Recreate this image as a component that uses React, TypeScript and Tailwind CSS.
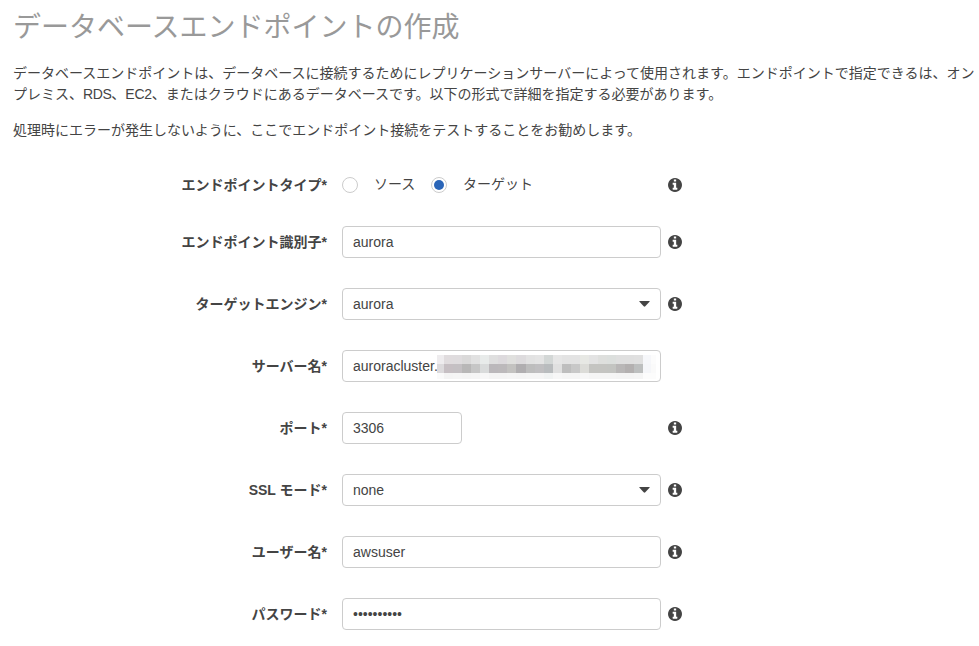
import { ReactNode } from "react";

// Each column of the redacted host name: width, then top, middle and bottom shade.
const MOSAIC: Array<[number, string, string, string]> = [
  [7, "#eeecee", "#dcdadc", "#fafafa"],
  [9, "#e0dcde", "#c6bfc3", "#f4f4f4"],
  [9, "#dfdcde", "#c4c0c3", "#f5f5f5"],
  [9, "#dad9d9", "#b8b7b7", "#f4f4f4"],
  [9, "#e1e1e1", "#c6c6c6", "#f5f5f5"],
  [9, "#e8ebea", "#d9dbdb", "#f7f7f7"],
  [9, "#dfdfdf", "#bbb8bb", "#f4f4f4"],
  [9, "#dddadd", "#bcb9bb", "#f4f4f4"],
  [9, "#e0e0de", "#c3c2c0", "#f5f5f5"],
  [10, "#dddbdd", "#b0aeb0", "#f4f4f4"],
  [9, "#e2e2e2", "#bdbdbd", "#f5f5f5"],
  [9, "#e4e4e4", "#c0bfc1", "#f5f5f5"],
  [9, "#d3d7d6", "#b9bcbe", "#f1f3f3"],
  [9, "#e6e6e6", "#e0e0e0", "#f7f7f7"],
  [9, "#e3e3e3", "#bebebe", "#f5f5f5"],
  [9, "#e3e3e3", "#c8c8c8", "#f5f5f5"],
  [9, "#e7e8e4", "#dcdcd8", "#f7f7f7"],
  [9, "#e3e3e3", "#c4c4c1", "#f5f5f5"],
  [9, "#dedfdd", "#c4c4c1", "#f5f5f5"],
  [9, "#dcdfdd", "#c3c4c1", "#f5f5f5"],
  [9, "#dfdfdf", "#b9b7b7", "#f4f4f4"],
  [9, "#dfdfdf", "#b3b0b0", "#f4f4f4"],
  [9, "#e0e0e0", "#bdbfbf", "#f5f5f5"],
  [8, "#f6f7fa", "#f5f6f9", "#fcfcfc"],
  [5, "#fcfcfc", "#fafafa", "#fcfcfc"],
];

function Mosaic() {
  return (
    <div className="mt-0.5 flex h-6">
      {MOSAIC.map(([width, top, middle, bottom], i) => (
        <div key={i} className="grid grid-rows-[9px_9px_6px]" style={{ width }}>
          <div style={{ background: top }} />
          <div style={{ background: middle }} />
          <div style={{ background: bottom }} />
        </div>
      ))}
    </div>
  );
}

function InfoIcon() {
  return (
    <svg className="ml-[7px] size-3.5" viewBox="0 128 1536 1536" fill="currentColor">
      <path d="M1024 1376v-160q0-14-9-23t-23-9h-96v-512q0-14-9-23t-23-9h-320q-14 0-23 9t-9 23v160q0 14 9 23t23 9h96v320h-96q-14 0-23 9t-9 23v160q0 14 9 23t23 9h448q14 0 23-9t9-23zm-128-896v-160q0-14-9-23t-23-9h-192q-14 0-23 9t-9 23v160q0 14 9 23t23 9h192q14 0 23-9t9-23zm640 416q0 209-103 385.5t-279.5 279.5-385.5 103-385.5-103-279.5-279.5-103-385.5 103-385.5 279.5-279.5 385.5-103 385.5 103 279.5 279.5 103 385.5z" />
    </svg>
  );
}

function Row({ label, info = true, children }: { label: string; info?: boolean; children: ReactNode }) {
  return (
    <div className="flex h-8 items-center">
      <div className="w-[327px] shrink-0 text-right font-bold">{label}</div>
      <div className="ml-[15px] w-[319px] shrink-0">{children}</div>
      {info && <InfoIcon />}
    </div>
  );
}

function Field({ value, small = false }: { value: string; small?: boolean }) {
  return (
    <input
      readOnly
      value={value}
      className={`${small ? "w-30" : "w-full"} block h-8 rounded border border-[#ccc] bg-white px-2.5 outline-none`}
    />
  );
}

function Select({ value }: { value: string }) {
  return (
    <div className="flex h-8 items-center justify-between rounded border border-[#ccc] pr-2.5 pl-2.5">
      {value}
      <svg width="11" height="6" viewBox="0 0 11 6" fill="currentColor">
        <path d="M.8 0h9.4q.9 0 .3.7L6.3 5.3q-.8.8-1.6 0L.5.7Q-.1 0 .8 0z" />
      </svg>
    </div>
  );
}

function Radio({ checked = false }: { checked?: boolean }) {
  return (
    <span className="flex size-4 items-center justify-center rounded-full border border-[#ccc]">
      {checked && <span className="size-2.5 rounded-full bg-[#2a65b8]" />}
    </span>
  );
}

export default function App() {
  return (
    <main className="h-[646px] w-[979px] overflow-hidden bg-white font-['Liberation_Sans','Noto_Sans_CJK_JP',sans-serif] text-sm leading-[22px] text-[#444]">
      <header className="pl-[13px] whitespace-nowrap">
        <h1 className="pt-2 text-[28px] leading-[40px] text-[#999]">データベースエンドポイントの作成</h1>
        <p className="mt-[15px] leading-[21px]">
          データベースエンドポイントは、データベースに接続するためにレプリケーションサーバーによって使用されます。エンドポイントで指定できるは、オン
          <br />
          プレミス、<span className="tracking-[-0.4px]">RDS</span>、<span className="tracking-[-0.3px]">EC2</span>
          、またはクラウドにあるデータベースです。以下の形式で詳細を指定する必要があります。
        </p>
        <p className="mt-3.5">処理時にエラーが発生しないように、ここでエンドポイント接続をテストすることをお勧めします。</p>
      </header>

      <form className="mt-7">
        <Row label="エンドポイントタイプ*">
          <div className="flex items-center">
            <Radio />
            <span className="mb-0.5 ml-4 w-[57px]">ソース</span>
            <Radio checked />
            <span className="mb-0.5 ml-4">ターゲット</span>
          </div>
        </Row>
        <div className="mt-[25px] flex flex-col gap-[30px]">
          <Row label="エンドポイント識別子*">
            <Field value="aurora" />
          </Row>
          <Row label="ターゲットエンジン*">
            <Select value="aurora" />
          </Row>
          <Row label="サーバー名*" info={false}>
            <div className="flex h-8 items-center rounded border border-[#ccc] pl-2.5">
              <span className="w-[84px]">auroracluster.</span>
              <Mosaic />
            </div>
          </Row>
          <Row label="ポート*">
            <Field value="3306" small />
          </Row>
          <Row label="SSL モード*">
            <Select value="none" />
          </Row>
          <Row label="ユーザー名*">
            <Field value="awsuser" />
          </Row>
          <Row label="パスワード*">
            <div className="flex h-8 items-center rounded border border-[#ccc] pl-2.5">••••••••••</div>
          </Row>
        </div>
      </form>
    </main>
  );
}
